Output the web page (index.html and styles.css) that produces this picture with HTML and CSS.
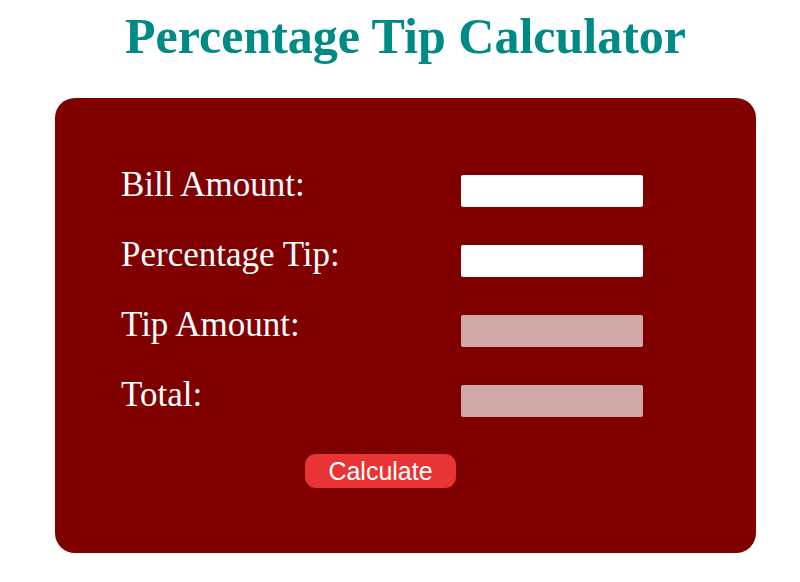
FILE: index.html
```html
<!DOCTYPE html>
<html>
<head>
<meta charset="utf-8">
<title>Percentage Tip Calculator</title>
<link rel="stylesheet" href="styles.css">
</head>
<body>
<div class="page">
  <h1 class="title">Percentage Tip Calculator</h1>
  <div class="card">
    <div class="row">
      <label class="label" for="bill">Bill Amount:</label>
      <input class="field" id="bill" type="text">
    </div>
    <div class="row">
      <label class="label" for="pct">Percentage Tip:</label>
      <input class="field" id="pct" type="text">
    </div>
    <div class="row">
      <label class="label" for="tip">Tip Amount:</label>
      <input class="field field-off" id="tip" type="text" disabled>
    </div>
    <div class="row">
      <label class="label" for="total">Total:</label>
      <input class="field field-off" id="total" type="text" disabled>
    </div>
    <div class="actions">
      <button class="btn" type="button">Calculate</button>
    </div>
  </div>
</div>
</body>
</html>
```

FILE: styles.css
```css
html, body {
  margin: 0;
  padding: 0;
  background: #ffffff;
}

.page {
  width: 701px;
  padding-left: 55px;
  padding-top: 8px;
  font-family: "Liberation Serif", "Times New Roman", serif;
}

.title {
  margin: 0 0 33px 0;
  text-align: center;
  font-size: 50px;
  line-height: 57px;
  font-weight: bold;
  color: #008a85;
}

.card {
  background: #800000;
  border-radius: 20px;
  padding: 77px 0 65px 66px;
  display: flex;
  flex-direction: column;
  gap: 38px;
}

.row {
  display: flex;
  align-items: flex-start;
  height: 32px;
}

.label {
  width: 340px;
  font-size: 35px;
  line-height: 20px;
  color: #ffffff;
}

.field {
  width: 182px;
  height: 32px;
  box-sizing: border-box;
  border: none;
  border-radius: 2px;
  background: #ffffff;
  padding: 0 6px;
  margin: 0;
}

.field-off {
  background: #d0a8a8;
}

.actions {
  display: flex;
  padding-left: 184px;
  margin-top: -1px;
}

.btn {
  width: 151px;
  height: 34px;
  border: none;
  border-radius: 11px;
  background: #e83434;
  color: #ffffff;
  font-family: "Liberation Sans", Arial, sans-serif;
  font-size: 25px;
  line-height: 32px;
  padding: 0;
}
```
